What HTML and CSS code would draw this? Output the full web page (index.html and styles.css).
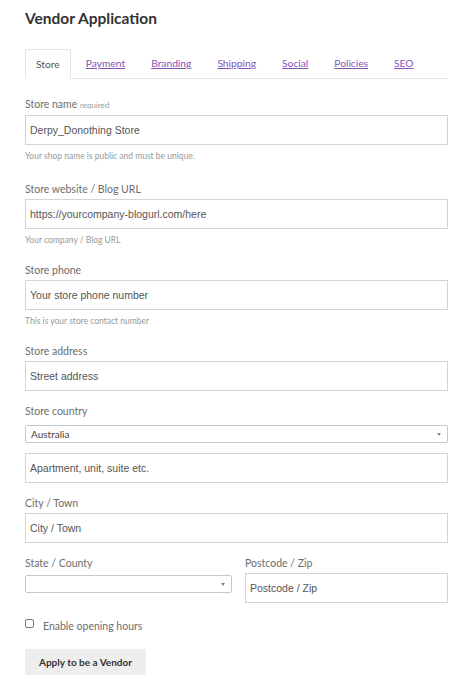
FILE: index.html
```html
<!DOCTYPE html>
<html lang="en">

<head>
    <meta charset="UTF-8">
    <meta name="viewport" content="width=device-width, initial-scale=1.0">
    <title>Vendor Application</title>
    <link rel="stylesheet" href="styles.css">
</head>

<body>
    <div class="container">
        <h1 class="page-title">Vendor Application</h1>

        <ul class="tabs">
            <li class="tab active">Store</li>
            <li class="tab"><a href="#">Payment</a></li>
            <li class="tab"><a href="#">Branding</a></li>
            <li class="tab"><a href="#">Shipping</a></li>
            <li class="tab"><a href="#">Social</a></li>
            <li class="tab"><a href="#">Policies</a></li>
            <li class="tab"><a href="#">SEO</a></li>
        </ul>

        <form class="vendor-form">
            <div class="field">
                <label>Store name <span class="required">required</span></label>
                <input type="text" class="text-input" value="Derpy_Donothing Store">
                <p class="help">Your shop name is public and must be unique.</p>
            </div>

            <div class="field">
                <label>Store website / Blog URL</label>
                <input type="text" class="text-input" value="https://yourcompany-blogurl.com/here">
                <p class="help">Your company / Blog URL</p>
            </div>

            <div class="field">
                <label>Store phone</label>
                <input type="text" class="text-input" placeholder="Your store phone number">
                <p class="help">This is your store contact number</p>
            </div>

            <div class="field">
                <label>Store address</label>
                <input type="text" class="text-input" placeholder="Street address">
            </div>

            <div class="field">
                <label>Store country</label>
                <div class="select-box">
                    <span>Australia</span>
                    <span class="arrow"></span>
                </div>
                <input type="text" class="text-input" placeholder="Apartment, unit, suite etc.">
            </div>

            <div class="field">
                <label>City / Town</label>
                <input type="text" class="text-input" placeholder="City / Town">
            </div>

            <div class="field-row">
                <div class="field">
                    <label>State / County</label>
                    <div class="select-box state">
                        <span></span>
                        <span class="arrow"></span>
                    </div>
                </div>
                <div class="field">
                    <label>Postcode / Zip</label>
                    <input type="text" class="text-input" placeholder="Postcode / Zip">
                </div>
            </div>

            <div class="checkbox-row">
                <span class="checkbox"></span>
                <span>Enable opening hours</span>
            </div>

            <button type="button" class="btn">Apply to be a Vendor</button>
        </form>
    </div>
</body>

</html>
```

FILE: styles.css
```css
body {
    font-family: Lato, "Open Sans", sans-serif;
    color: #6d6d6d;
    margin: 0;
    padding: 0;
    background: #fff;
}

.container {
    padding: 7px 26px 0 25px;
}

.page-title {
    font-size: 15.5px;
    font-weight: 700;
    color: #333;
    margin: 0 0 20px;
    line-height: 22px;
}

/* tab bar */
.tabs {
    list-style: none;
    display: flex;
    margin: 0 0 18px;
    padding: 0;
    border-bottom: 1px solid #e6e6e6;
    height: 29px;
}

.tab {
    font-size: 10.25px;
    line-height: 29px;
    padding: 0 13px;
}

.tab a {
    color: #7f54b3;
    text-decoration: underline;
}

.tab.active {
    border: 1px solid #e6e6e6;
    border-bottom: 1px solid #fff;
    margin-bottom: -1px;
    padding: 0 10px;
    color: #555;
    background: #fff;
}

.tab.active + .tab {
    padding-left: 15px;
}

/* form fields */
.field {
    display: flex;
    flex-direction: column;
    margin-bottom: 13px;
}

.field label {
    font-size: 10.5px;
    line-height: 14px;
    margin-bottom: 3px;
}

.required {
    font-size: 8px;
    color: #999;
}

.text-input {
    display: block;
    box-sizing: border-box;
    width: 100%;
    height: 30px;
    margin: 0;
    padding: 0 4px;
    border: 1px solid #d4d4d4;
    font-family: "Liberation Sans", Arial, sans-serif;
    font-size: 10.5px;
    color: #555;
    background: #fff;
}

.text-input::placeholder {
    color: #555;
}

.help {
    font-size: 8.5px;
    color: #999;
    margin: 5px 0 4px;
    line-height: 12px;
}

.field:first-child .help {
    margin-bottom: 7px;
}

.select-box {
    display: flex;
    justify-content: space-between;
    align-items: center;
    box-sizing: border-box;
    height: 18px;
    border: 1px solid #c9c9c9;
    border-radius: 2px;
    padding: 0 6px 0 5px;
    margin: 4px 0 10px;
    font-size: 10px;
    color: #444;
}

.arrow {
    width: 0;
    height: 0;
    border-left: 2.5px solid transparent;
    border-right: 2.5px solid transparent;
    border-top: 3px solid #888;
}

.field-row {
    display: grid;
    grid-template-columns: 207fr 203fr;
    gap: 13px;
}

.field-row .field {
    margin-bottom: 0;
}

.select-box.state {
    margin: 2px 0 0;
}

.checkbox-row {
    display: flex;
    align-items: center;
    gap: 9px;
    font-size: 10.5px;
    line-height: 14px;
    margin: 16px 0 16px;
}

.checkbox {
    width: 7px;
    height: 7px;
    border: 1px solid #777;
    border-radius: 2px;
    margin-top: -6px;
}

.btn {
    background: #eee;
    border: none;
    padding: 0 14px;
    height: 26px;
    font-family: Lato, "Open Sans", sans-serif;
    font-weight: 700;
    font-size: 10px;
    color: #333;
}
```
